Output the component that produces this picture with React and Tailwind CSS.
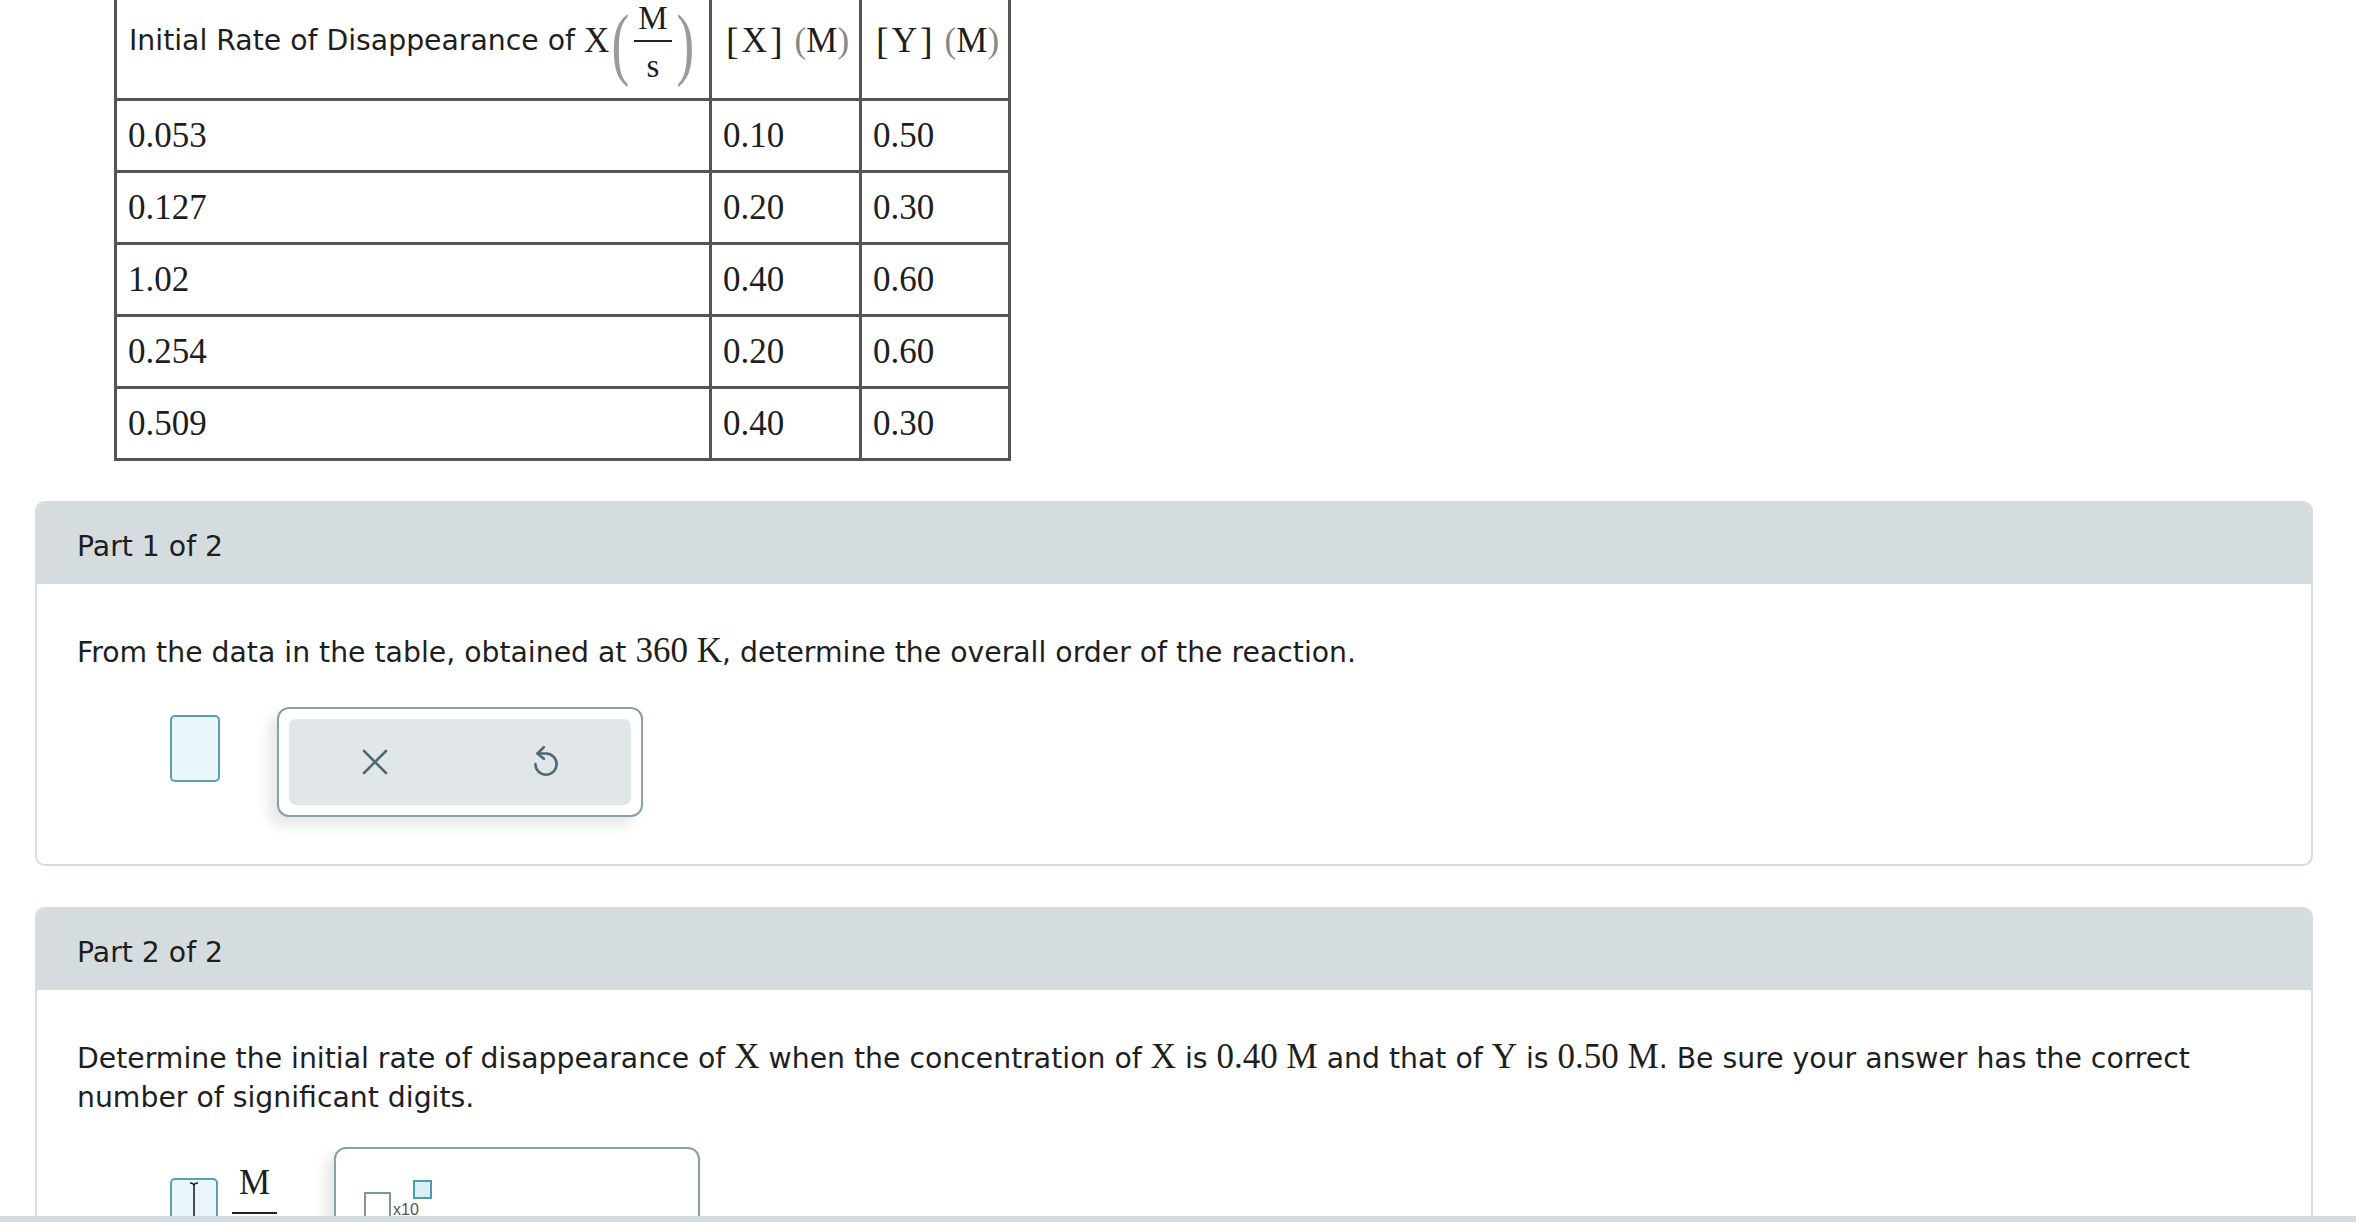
import React from "react";

const rows = [
  ["0.053", "0.10", "0.50"],
  ["0.127", "0.20", "0.30"],
  ["1.02", "0.40", "0.60"],
  ["0.254", "0.20", "0.60"],
  ["0.509", "0.40", "0.30"],
];

// serif math text, like the rendered formulas
function M({ children, className = "" }) {
  return (
    <span className={`font-['Liberation_Serif',serif] text-[35px] leading-none ${className}`}>
      {children}
    </span>
  );
}

function BigParen({ children, className = "" }) {
  return (
    <span className={`inline-block font-['Liberation_Serif',serif] text-[38px] leading-none text-[#9a9a9a] scale-y-[2.1] scale-x-[1.4] ${className}`}>
      {children}
    </span>
  );
}

function UnitHeader({ v }) {
  return (
    <div className="bg-white h-[115px] flex items-center pl-[14px] whitespace-nowrap">
      <M className="text-[38px]">[</M>
      <M className="mx-[3px]">{v}</M>
      <M className="text-[38px]">]</M>
      <M className="ml-[12px]">
        <span className="text-[#888]">(</span>M<span className="text-[#888]">)</span>
      </M>
    </div>
  );
}

function XIcon() {
  return (
    <svg width="26" height="26" viewBox="0 0 26 26" fill="none" stroke="#4b6a75" strokeWidth="2.6" strokeLinecap="round">
      <path d="M2 2 L24 24" />
      <path d="M24 2 L2 24" />
    </svg>
  );
}

function UndoIcon() {
  return (
    <svg width="30" height="36" viewBox="0 0 28 34" fill="none" stroke="#4b6a75" strokeWidth="2.5" strokeLinecap="round" strokeLinejoin="round">
      <path d="M12 3 L6 9 L12 14" />
      <path d="M6 9 H14 A10 10 0 1 1 4 19" />
    </svg>
  );
}

function Panel({ title, children }) {
  return (
    <section className="rounded-[10px] border-2 border-[#d5dcdf] overflow-hidden bg-white">
      <div className="h-[81px] bg-[#d5dcdf] px-[40px] pt-[5px] flex items-center">{title}</div>
      <div className="px-[40px] pt-[49px]">{children}</div>
    </section>
  );
}

export default function App() {
  return (
    <div className="h-[1222px] overflow-hidden flex flex-col bg-white text-[#1e1e1e] font-['DejaVu_Sans',Verdana,sans-serif] text-[28.3px] leading-[39px]">
      <main className="flex-1 overflow-hidden pl-[35px] pr-[43px]">
        {/* data table, scrolled so its top is cut off */}
        <div className="ml-[79px] -mt-[20px] w-fit grid grid-cols-[592px_147px_146px] gap-[3px] p-[3px] bg-[#555]">
          <div className="bg-white h-[115px] flex items-center pl-[12px] whitespace-nowrap">
            <span>Initial Rate of Disappearance of&nbsp;</span>
            <M>X</M>
            <BigParen className="ml-[5px] mt-[4px]">(</BigParen>
            <span className="inline-flex flex-col items-center mx-[7px] font-['Liberation_Serif',serif] text-[33px] leading-[30px] mt-[3px]">
              <span>M</span>
              <span className="block w-[38px] h-[2px] bg-[#222] mt-[7px] mb-[9px]" />
              <span>s</span>
            </span>
            <BigParen className="mt-[4px]">)</BigParen>
          </div>
          <UnitHeader v="X" />
          <UnitHeader v="Y" />
          {rows.map((r) =>
            r.map((c, i) => (
              <div key={r[0] + i} className="bg-white h-[69px] flex items-center pl-[11px]">
                <M>{c}</M>
              </div>
            ))
          )}
        </div>

        <div className="mt-[40px]">
          <Panel title="Part 1 of 2">
            <p>
              From the data in the table, obtained at <M>360 K</M>, determine the overall order of the reaction.
            </p>
            <div className="flex items-start mt-[35px] pb-[47px]">
              <div className="ml-[93px] mt-[8px] w-[50px] h-[67px] rounded-[5px] border-2 border-[#5b9fb1] bg-[#e9f5fa]" />
              <div className="ml-[57px] w-[366px] h-[110px] rounded-[12px] border-2 border-[#8aa0a9] bg-white p-[10px] shadow-[-8px_8px_14px_rgba(0,0,0,0.10)]">
                <div className="h-full rounded-[7px] bg-[#e1e6e9] flex">
                  <button className="flex-1 flex items-center justify-center">
                    <XIcon />
                  </button>
                  <button className="flex-1 flex items-center justify-center">
                    <UndoIcon />
                  </button>
                </div>
              </div>
            </div>
          </Panel>
        </div>

        <div className="mt-[41px]">
          <Panel title="Part 2 of 2">
            <p>
              Determine the initial rate of disappearance of <M>X</M> when the concentration of <M>X</M> is{" "}
              <M>0.40 M</M> and that of <M>Y</M> is <M>0.50 M</M>. Be sure your answer has the correct
              <br />
              number of significant digits.
            </p>
            <div className="flex items-start mt-[30px]">
              <div className="ml-[93px] w-[108px] flex items-start">
                <div className="relative mt-[31px] w-[48px] h-[70px] rounded-[5px] border-2 border-[#5b9fb1] bg-[#e9f5fa]">
                  <svg className="absolute left-[16px] top-[2px]" width="12" height="40" viewBox="0 0 12 40" fill="none" stroke="#222" strokeWidth="1.6">
                    <path d="M2 1 Q6 1 6 4 Q6 1 10 1" />
                    <path d="M6 4 V40" />
                  </svg>
                </div>
                <div className="ml-[14px] mt-[18px] flex flex-col items-center">
                  <M>M</M>
                  <span className="block w-[45px] h-[2px] bg-[#222] mt-[12px]" />
                </div>
              </div>
              <div className="ml-[56px] w-[366px] h-[130px] rounded-[12px] border-2 border-[#8aa0a9] bg-white shadow-[-8px_8px_14px_rgba(0,0,0,0.10)] pl-[28px] pt-[43px]">
                <div className="flex items-start">
                  <div className="w-[27px] h-[36px] border-2 border-[#7f969f]" />
                  <span className="mt-[10px] ml-[2px] text-[16px] leading-[16px] text-[#555] font-['Liberation_Sans',Arial,sans-serif]">x10</span>
                  <div className="-ml-[6px] -mt-[12px] w-[19px] h-[19px] border-[2.5px] border-[#4b9db5] bg-[#dceff5]" />
                </div>
              </div>
            </div>
          </Panel>
        </div>
      </main>
      <div className="h-[6px] shrink-0 bg-[#d5dcdf]" />
    </div>
  );
}
